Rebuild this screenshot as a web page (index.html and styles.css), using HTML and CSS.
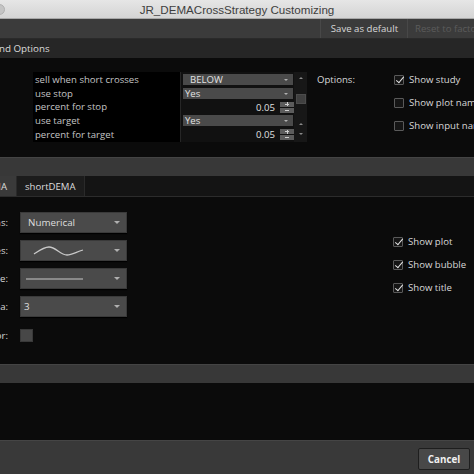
FILE: index.html
```html
<!DOCTYPE html>
<html>
<head>
<meta charset="utf-8">
<link rel="stylesheet" href="styles.css">
</head>
<body>
<div class="window">
  <div class="titlebar">
    <span class="light"></span>
    <span class="title">JR_DEMACrossStrategy Customizing</span>
  </div>
  <div class="toolbar">
    <span class="tb-btn">Save as default</span>
    <span class="tb-btn faded">Reset to factory</span>
  </div>
  <div class="section-head"><span class="clip-left">Inputs and Options</span></div>
  <div class="inputs-area">
    <div class="inputs-table">
      <div class="labels">
        <div class="lrow">sell when short crosses</div>
        <div class="lrow">use stop</div>
        <div class="lrow">percent for stop</div>
        <div class="lrow">use target</div>
        <div class="lrow">percent for target</div>
      </div>
      <div class="values">
        <div class="vrow"><div class="mini-select"><span class="sel-text indent">BELOW</span><span class="arrow small"></span></div></div>
        <div class="vrow"><div class="mini-select"><span class="sel-text">Yes</span><span class="arrow small"></span></div></div>
        <div class="vrow num"><span class="numval">0.05</span><span class="spin"><span class="sp plus"></span><span class="sp minus"></span></span></div>
        <div class="vrow"><div class="mini-select"><span class="sel-text">Yes</span><span class="arrow small"></span></div></div>
        <div class="vrow num"><span class="numval">0.05</span><span class="spin"><span class="sp plus"></span><span class="sp minus"></span></span></div>
      </div>
      <div class="scrollbar">
        <span class="sarrow up"></span>
        <span class="thumb"></span>
        <span class="sarrow up low"></span>
        <span class="sarrow down"></span>
      </div>
    </div>
    <div class="options">
      <div class="opt-label">Options:</div>
      <div class="opt-list">
        <label class="cb-row"><span class="cb checked"></span>Show study</label>
        <label class="cb-row"><span class="cb"></span>Show plot names</label>
        <label class="cb-row"><span class="cb"></span>Show input names</label>
      </div>
    </div>
  </div>
  <div class="band"></div>
  <div class="tabs">
    <div class="tab first"><span>longDEMA</span></div>
    <div class="tab">shortDEMA</div>
  </div>
  <div class="plot-area">
    <div class="plot-form">
      <div class="frow"><span class="flabel"><span>Draw as:</span></span><div class="select"><span class="sel-text">Numerical</span><span class="arrow"></span></div></div>
      <div class="frow"><span class="flabel"><span>Curves:</span></span><div class="select">
        <svg class="icon" width="60" height="14" viewBox="0 0 60 14"><path d="M4 10 C10 6 14 3 19 3 C26 3 30 11 37 11 C42 11 46 8 53 6" fill="none" stroke="#c8c8c8" stroke-width="1.3"/></svg>
        <span class="arrow"></span></div></div>
      <div class="frow"><span class="flabel"><span>Line style:</span></span><div class="select">
        <svg class="icon line" width="60" height="14" viewBox="0 0 60 14"><path d="M1 7 H58" fill="none" stroke="#c8c8c8" stroke-width="1.2"/></svg>
        <span class="arrow"></span></div></div>
      <div class="frow"><span class="flabel"><span>Area:</span></span><div class="select"><span class="sel-text tight">3</span><span class="arrow"></span></div></div>
      <div class="frow swatch-row"><span class="flabel"><span>Color:</span></span><span class="swatch"></span></div>
    </div>
    <div class="plot-opts">
      <label class="cb-row"><span class="cb checked"></span>Show plot</label>
      <label class="cb-row"><span class="cb checked"></span>Show bubble</label>
      <label class="cb-row"><span class="cb checked"></span>Show title</label>
    </div>
  </div>
  <div class="band"></div>
  <div class="empty"></div>
  <div class="footer">
    <button class="cancel">Cancel</button>
  </div>
</div>
</body>
</html>
```
FILE: styles.css
```css
* { box-sizing: border-box; }
html, body { margin: 0; padding: 0; background: #0b0b0b; }
.window {
  width: 474px; height: 474px; overflow: hidden;
  display: flex; flex-direction: column;
  font-family: "Open Sans", "DejaVu Sans", sans-serif;
  color: #d6d6d6;
  background: #0b0b0b;
}
.titlebar {
  height: 19px; flex: none;
  background: linear-gradient(#e6e6e6, #d4d4d4);
  border-bottom: 1px solid #a8a8a8;
  display: flex; align-items: center; justify-content: center;
  position: relative;
}
.titlebar .light {
  position: absolute; left: -6px; top: 4px;
  width: 11px; height: 11px; border-radius: 50%;
  background: #c4c4c4; border: 1px solid #b0b0b0;
}
.title {
  font-family: "Liberation Sans", Arial, sans-serif;
  font-size: 11.6px; color: #3e3e3e;
}
.toolbar {
  height: 20px; flex: none;
  background: #3b3b3b;
  border-bottom: 1px solid #2a2a2a;
  display: flex; justify-content: flex-end; align-items: stretch;
  overflow: hidden;
}
.tb-btn {
  display: flex; align-items: center;
  font-size: 9.6px; color: #d8d8d8;
  padding: 0 9px 0 9px;
  border-left: 1px solid #484848;
  white-space: nowrap;
}
.tb-btn:first-child { padding: 0 9px 0 10px; }
.tb-btn.faded { color: #5c5c5c; margin-right: -20px; padding-left: 7px; }
.section-head {
  height: 19px; flex: none;
  background: #262626;
  display: flex; align-items: center;
  overflow: hidden;
  font-size: 9.8px; color: #dcdcdc;
  white-space: nowrap;
}
.clip-left { text-indent: -38px; display: block; }
.inputs-area {
  height: 99px; flex: none;
  background: #0b0b0b;
  display: flex; align-items: flex-start;
  padding: 14px 0 0 33px;
}
.inputs-table {
  display: flex; height: 70px;
}
.labels {
  width: 147px; background: #000;
  padding-top: 1px;
}
.lrow {
  height: 13.7px; line-height: 13.7px;
  font-size: 9.6px; color: #c4c4c4;
  padding-left: 2px; white-space: nowrap;
}
.values {
  width: 114px; background: #111;
  border-left: 1px solid #262626;
  padding-top: 1px;
}
.vrow {
  height: 13.7px; display: flex; align-items: center;
  padding: 0 0 0 2px;
}
.mini-select {
  width: 110px; height: 11px;
  background: #4a4a4a;
  display: flex; align-items: center; justify-content: space-between;
  padding: 0 5px 0 2px;
  font-size: 9.6px; color: #e2e2e2;
}
.sel-text.indent { padding-left: 5px; }
.vrow.num { justify-content: flex-end; padding-right: 0; }
.numval { font-size: 9.6px; color: #e0e0e0; margin-right: 5px; }
.spin {
  display: flex; flex-direction: column; gap: 1px;
  width: 14px;
}
.sp {
  height: 5px; background: #5c5c5c;
  position: relative;
}
.sp::before {
  content: ""; position: absolute; left: 5px; top: 2px;
  width: 4px; height: 1px; background: #cfcfcf;
}
.sp.plus::after {
  content: ""; position: absolute; left: 6.5px; top: 0.5px;
  width: 1px; height: 4px; background: #cfcfcf;
}
.scrollbar {
  width: 13px; background: #171717;
  display: flex; flex-direction: column; align-items: center;
  padding-top: 5px;
}
.sarrow { width: 0; height: 0; border-left: 2px solid transparent; border-right: 2px solid transparent; }
.sarrow.up { border-bottom: 2px solid #8a8a8a; }
.sarrow.down { border-top: 2px solid #8a8a8a; margin-top: 8px; }
.sarrow.low { margin-top: 19px; }
.thumb { width: 10px; height: 10px; background: #404040; margin-top: 15px; border: 1px solid #4c4c4c; }
.options {
  display: flex; margin-left: 10px; padding-top: 1px;
}
.opt-label { font-size: 9.6px; width: 77px; color: #d8d8d8; line-height: 13px; }
.opt-list { display: flex; flex-direction: column; gap: 10px; }
.cb-row {
  display: flex; align-items: center; gap: 5px;
  font-size: 9.6px; color: #d8d8d8; white-space: nowrap;
  height: 13px;
}
.cb {
  width: 10px; height: 10px; flex: none;
  border: 1px solid #5a5a5a; background: #151515; border-radius: 1px;
  position: relative;
}
.cb.checked::after {
  content: ""; position: absolute;
  left: 2.5px; top: -1px; width: 3px; height: 7px;
  border: solid #e6e6e6; border-width: 0 1.6px 1.6px 0;
  transform: rotate(40deg);
}
.band {
  height: 19px; flex: none;
  background: #383838;
  border-top: 1px solid #444;
}
.tabs {
  height: 21px; flex: none;
  background: #141414;
  border-bottom: 1px solid #2c2c2c;
  display: flex;
}
.tab {
  display: flex; align-items: center;
  font-size: 9.6px; color: #dcdcdc;
  padding: 0 8px 0 8px;
  background: #1c1c1c;
  border-right: 1px solid #2a2a2a;
  white-space: nowrap;
}
.tab.first {
  width: 17px; padding: 0 9px 0 0;
  background: #3a3a3a;
  justify-content: flex-end; overflow: hidden;
}
.tab.first span { flex: none; }
.plot-area {
  height: 167px; flex: none;
  display: flex; justify-content: space-between;
  padding-top: 15px;
}
.plot-form { display: flex; flex-direction: column; gap: 7px; }
.frow { display: flex; align-items: center; height: 21px; gap: 12px; }
.flabel {
  width: 8px; display: flex; justify-content: flex-end; overflow: hidden;
  font-size: 9.6px; color: #d8d8d8; white-space: nowrap;
}
.flabel span { flex: none; }
.select {
  width: 107px; height: 21px;
  background: #4a4a4a;
  border: 1px solid #3a3a3a;
  box-shadow: 0 1px 1px #000;
  display: flex; align-items: center; justify-content: space-between;
  padding: 0 6px 0 7px;
  font-size: 9.8px; color: #dedede;
}
.sel-text.tight { margin-left: -4px; }
.icon { margin-left: 2px; }
.icon.line { margin-left: -3px; }
.arrow {
  width: 0; height: 0; flex: none;
  border-left: 3px solid transparent; border-right: 3px solid transparent;
  border-top: 3px solid #b0b0b0;
}
.arrow.small { border-left-width: 2.5px; border-right-width: 2.5px; border-top-width: 2.5px; }
.swatch-row { margin-top: 4px; height: 14px; }
.swatch { width: 13px; height: 13px; background: #474747; border: 1px solid #393939; }
.plot-opts {
  display: flex; flex-direction: column; gap: 10px;
  padding: 23px 8px 0 0; width: 81px;
}
.empty { height: 57px; flex: none; background: #0b0b0b; }
.footer {
  flex: 1;
  background: #393939;
  border-top: 1px solid #454545;
  display: flex; justify-content: flex-end; align-items: flex-start;
  padding: 7px 4px 0 0;
}
.cancel {
  width: 52px; height: 22px;
  background: #484848;
  border: 1px solid #1e1e1e;
  border-radius: 2px;
  font-family: "Open Sans", "DejaVu Sans", sans-serif;
  font-weight: bold; font-size: 9.8px; color: #f0f0f0;
  padding: 0;
}
```
